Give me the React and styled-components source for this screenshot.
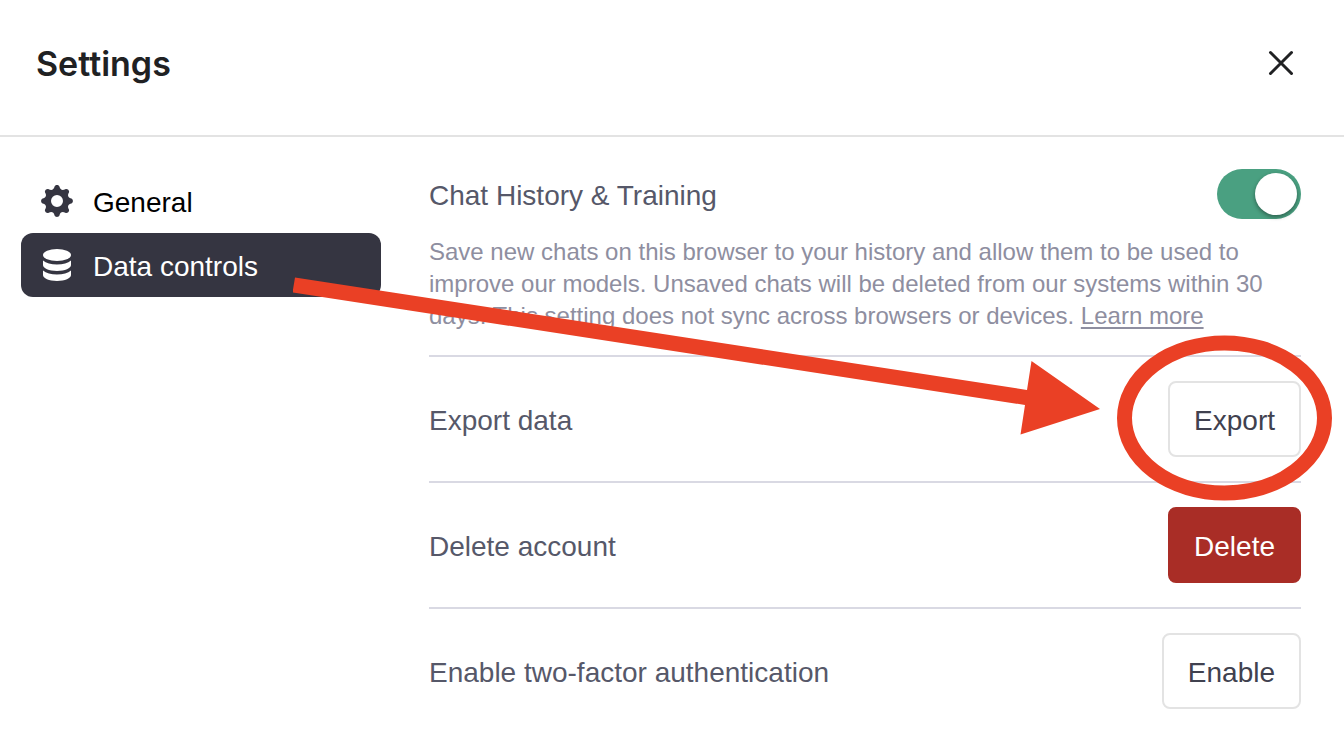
import React from "react";
import styled, { createGlobalStyle, css } from "styled-components";

const GlobalStyle = createGlobalStyle`
  *, *::before, *::after { box-sizing: border-box; }
  body {
    margin: 0;
    background: #fff;
    color: #565869;
    font-family: "Liberation Sans", Arial, sans-serif;
    font-size: 28px;
    line-height: 40px;
  }
  button { font: inherit; cursor: pointer; }
`;

const Dialog = styled.div`
  min-height: 100vh;
  background: #fff;
`;

const Header = styled.header`
  display: flex;
  align-items: center;
  justify-content: space-between;
  padding: 40px 43px 47px 36px;
  border-bottom: 2px solid #e3e3e3;
`;

const Title = styled.h1`
  margin: 0;
  color: #202123;
  font-family: Inter, "Liberation Sans", sans-serif;
  font-size: 34px;
  font-weight: 600;
  line-height: 48px;
`;

const CloseButton = styled.button`
  display: flex;
  padding: 0;
  border: 0;
  background: none;
  color: #202123;
`;

const Body = styled.div`
  position: relative;
  display: flex;
  gap: 48px;
  padding: 32px 43px 19px 21px;
`;

const Nav = styled.nav`
  display: flex;
  flex: 0 0 360px;
  flex-direction: column;
`;

const NavButton = styled.button`
  display: flex;
  align-items: center;
  gap: 20px;
  height: 64px;
  padding: 0 20px;
  border: 0;
  border-radius: 12px;
  background: ${(p) => (p.$active ? "#353541" : "transparent")};
  color: ${(p) => (p.$active ? "#fff" : "#000")};
  text-align: left;

  svg {
    flex: none;
    color: ${(p) => (p.$active ? "#fff" : "#353541")};
  }
`;

const Panel = styled.main`
  flex: 1;
  min-width: 0;
`;

const divider = css`
  border-bottom: 2px solid #d9d9e3;
`;

const HistorySection = styled.section`
  padding-bottom: 23px;
  ${divider}
`;

const SettingLine = styled.div`
  display: flex;
  align-items: center;
  justify-content: space-between;
`;

const SettingRow = styled(SettingLine)`
  padding: 24px 0;
  ${(p) => !p.$last && divider}
`;

const Label = styled.span`
  padding-top: 4px;
`;

const Toggle = styled.input`
  appearance: none;
  display: flex;
  width: 84px;
  height: 50px;
  margin: 0;
  padding: 4px;
  border-radius: 25px;
  background: #8e8ea0;
  cursor: pointer;

  &::before {
    content: "";
    width: 42px;
    height: 42px;
    border-radius: 50%;
    background: #fff;
    box-shadow: 0 2px 4px rgba(0, 0, 0, 0.4);
  }

  &:checked {
    justify-content: flex-end;
    background: #4aa081;
  }
`;

const Description = styled.p`
  margin: 17px 0 0;
  color: #8e8ea0;
  font-size: 24px;
  line-height: 32px;
`;

const LearnMore = styled.a`
  color: inherit;
  text-decoration: underline;
  text-decoration-thickness: 2px;
  text-underline-offset: 3px;
`;

const ActionButton = styled.button`
  height: 76px;
  padding: 4px 24px 0;
  border: 2px solid ${(p) => (p.$danger ? "#a92d26" : "#e3e3e3")};
  border-radius: 8px;
  background: ${(p) => (p.$danger ? "#a92d26" : "#fff")};
  color: ${(p) => (p.$danger ? "#fff" : "#40414f")};
`;

const Highlighted = styled.div`
  position: relative;
  display: flex;
`;

const Ring = styled.svg`
  position: absolute;
  top: -46px;
  right: -31px;
  pointer-events: none;
`;

const Arrow = styled.svg`
  position: absolute;
  top: 139px;
  left: 293px;
  width: calc(100% - 537px);
  height: 160px;
  pointer-events: none;
`;

function gearPath() {
  const at = (radius, degrees) => {
    const a = (degrees * Math.PI) / 180;
    return `${(16 + radius * Math.cos(a)).toFixed(2)} ${(16 + radius * Math.sin(a)).toFixed(2)}`;
  };
  let d = `M${at(14.4, -10)}`;
  for (let tooth = 0; tooth < 360; tooth += 45) {
    d += `C${at(16.6, tooth - 7)} ${at(16.6, tooth + 7)} ${at(14.4, tooth + 10)}`;
    d += `C${at(11.6, tooth + 16)} ${at(11.6, tooth + 29)} ${at(14.4, tooth + 35)}`;
  }
  return `${d}ZM22 16a6 6 0 1 0-12 0a6 6 0 1 0 12 0Z`;
}

const GearIcon = () => (
  <svg width="32" height="32" viewBox="0 0 32 32" fill="currentColor" aria-hidden="true">
    <path fillRule="evenodd" d={gearPath()} />
  </svg>
);

const DatabaseIcon = () => (
  <svg width="32" height="32" viewBox="0 0 32 32" fill="currentColor" aria-hidden="true">
    <ellipse cx="16" cy="6" rx="14" ry="6" />
    <path d="M2 11.500C5 14.200 10 15.500 16 15.500S27 14.200 30 11.500V16C30 19.200 24 22 16 22S2 19.200 2 16Z" />
    <path d="M2 21.500C5 24.200 10 25.500 16 25.500S27 24.200 30 21.500V26C30 29.200 24 32 16 32S2 29.200 2 26Z" />
  </svg>
);

const CloseIcon = () => (
  <svg width="40" height="40" viewBox="0 0 40 40" fill="none" stroke="currentColor" strokeWidth="3" strokeLinecap="round" aria-hidden="true">
    <path d="M9.500 8.500l21 21M30.500 8.500l-21 21" />
  </svg>
);

export default function App() {
  return (
    <Dialog role="dialog" aria-labelledby="title">
      <GlobalStyle />
      <Header>
        <Title id="title">Settings</Title>
        <CloseButton type="button" aria-label="Close">
          <CloseIcon />
        </CloseButton>
      </Header>
      <Body>
        <Nav>
          <NavButton type="button">
            <GearIcon />
            <Label>General</Label>
          </NavButton>
          <NavButton type="button" $active>
            <DatabaseIcon />
            <Label>Data controls</Label>
          </NavButton>
        </Nav>
        <Panel>
          <HistorySection>
            <SettingLine>
              <Label as="label" htmlFor="history">Chat History &amp; Training</Label>
              <Toggle id="history" type="checkbox" role="switch" defaultChecked />
            </SettingLine>
            <Description>
              Save new chats on this browser to your history and allow them to be used to improve our
              models. Unsaved chats will be deleted from our systems within 30 days. This setting does
              not sync across browsers or devices. <LearnMore href="#learn-more">Learn more</LearnMore>
            </Description>
          </HistorySection>
          <SettingRow>
            <Label>Export data</Label>
            <Highlighted>
              <ActionButton type="button">Export</ActionButton>
              <Ring width="215" height="166" viewBox="0 0 215 166" fill="none" stroke="#ea4025" strokeWidth="15" aria-hidden="true">
                <ellipse cx="107.5" cy="83" rx="100" ry="75" />
              </Ring>
            </Highlighted>
          </SettingRow>
          <SettingRow>
            <Label>Delete account</Label>
            <ActionButton type="button" $danger>Delete</ActionButton>
          </SettingRow>
          <SettingRow $last>
            <Label>Enable two-factor authentication</Label>
            <ActionButton type="button">Enable</ActionButton>
          </SettingRow>
        </Panel>
        <Arrow viewBox="0 0 807 160" preserveAspectRatio="none" fill="#ea4025" aria-hidden="true">
          <path d="M2 1.500L734 114L738.500 85L807 133L727.500 158.500L732 129L-0.500 16.500Z" />
        </Arrow>
      </Body>
    </Dialog>
  );
}
